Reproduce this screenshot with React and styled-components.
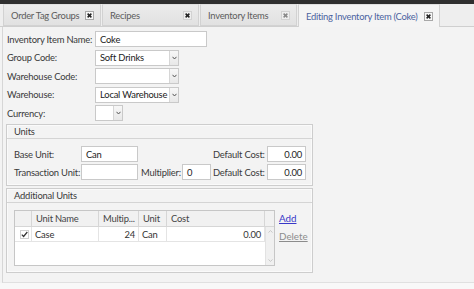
import React from "react";
import styled, { createGlobalStyle } from "styled-components";

const Global = createGlobalStyle`
  html, body { margin: 0; padding: 0; background: #f3f3f3; }
  body { font-family: Lato, "Segoe UI", sans-serif; font-size: 9.4px; letter-spacing: -0.2px; color: #333; }
  * { box-sizing: border-box; }
`;

const Window = styled.div`
  width: 474px;
  height: 289px;
  overflow: hidden;
  display: flex;
  flex-direction: column;
  background: #f3f3f3;
`;

const TopBar = styled.div`
  height: 4px;
  flex: none;
  background: #2f2f2f;
`;

const TabStrip = styled.div`
  height: 23px;
  flex: none;
  display: flex;
  gap: 1px;
  padding-left: 3px;
  background: #eeeeee;
  border-bottom: 1px solid #cfcfcf;
`;

const Tab = styled.div`
  width: ${(p) => p.$w}px;
  height: ${(p) => (p.$active ? "23px" : "22px")};
  display: flex;
  align-items: center;
  justify-content: space-between;
  padding: 0 6px 0 7px;
  border: 1px solid #d2d2d2;
  border-top-color: #e0e0e0;
  border-bottom: ${(p) => (p.$active ? "none" : "1px solid #d2d2d2")};
  background: ${(p) => (p.$active ? "#f4f4f4" : "linear-gradient(#ebebeb, #e1e1e1)")};
  color: ${(p) => (p.$active ? "#4b63a0" : "#5c5c5c")};
  font-size: 9.4px;
  letter-spacing: -0.25px;
  white-space: nowrap;
  position: relative;
  z-index: ${(p) => (p.$active ? 1 : 0)};
`;

const Close = styled.span`
  width: 9px;
  height: 9px;
  flex: none;
  display: flex;
  align-items: center;
  justify-content: center;
  border: 1px solid ${(p) => (p.$strong ? "#a8a8a8" : "#d2d2d2")};
  background: ${(p) => (p.$strong ? "#f7f7f7" : "#eeeeee")};
`;

const Content = styled.div`
  flex: 1;
  margin-left: 2px;
  border-left: 1px solid #d6d6d6;
  border-bottom: 1px solid #e0e0e0;
  display: flex;
  flex-direction: column;
`;

const Footer = styled.div`
  height: 6px;
  flex: none;
  background: #f8f8f8;
`;

const Form = styled.div`
  display: flex;
  flex-direction: column;
  gap: 2.5px;
  padding: 4px 0 0 4px;
`;

const Row = styled.div`
  display: grid;
  grid-template-columns: 88px auto;
  align-items: center;
  height: 16px;
`;

const Label = styled.span`
  color: #3a3a3a;
  white-space: nowrap;
`;

const TextBox = styled.div`
  width: ${(p) => p.$w}px;
  height: ${(p) => p.$h || 16}px;
  background: #fff;
  border: 1px solid #c9c9c9;
  padding: 0 ${(p) => (p.$right ? "3px" : "4px")};
  display: flex;
  align-items: center;
  justify-content: ${(p) => (p.$right ? "flex-end" : "flex-start")};
  color: #222;
  white-space: nowrap;
`;

const Combo = styled.div`
  width: ${(p) => p.$w}px;
  height: 16px;
  background: #fff;
  border: 1px solid #c9c9c9;
  display: flex;
  align-items: stretch;
`;

const ComboValue = styled.span`
  flex: 1;
  padding-left: 4px;
  display: flex;
  align-items: center;
  color: #222;
  white-space: nowrap;
  overflow: hidden;
`;

const DropBtn = styled.span`
  width: 9px;
  flex: none;
  border-left: 1px solid #d6d6d6;
  background: linear-gradient(#f7f7f7, #e8e8e8);
  display: flex;
  align-items: center;
  justify-content: center;
`;

const Group = styled.div`
  width: 307px;
  margin: ${(p) => p.$mt}px 0 0 3px;
  border: 1px solid #cdcdcd;
  box-shadow: inset 0 0 0 1px #fafafa;
  background: #f3f3f3;
`;

const GroupHeader = styled.div`
  height: 14px;
  border-bottom: 1px solid #d4d4d4;
  padding-left: 7px;
  display: flex;
  align-items: center;
  color: #3a3a3a;
`;

const UnitsBody = styled.div`
  display: grid;
  grid-template-columns: 67px 57px 44px 29px 56px 39px;
  grid-auto-rows: 16px;
  row-gap: 2px;
  align-items: center;
  padding: 7px 0 5px 7px;
`;

const CellLabel = styled.span`
  padding-left: ${(p) => p.$pl || 0}px;
  white-space: nowrap;
  color: #3a3a3a;
`;

const AddBody = styled.div`
  display: flex;
  padding: 7px 0 6px 7px;
`;

const Table = styled.div`
  width: 261px;
  height: 56px;
  border: 1px solid #c6c6c6;
  display: flex;
  flex-direction: column;
  background: #fff;
`;

const cols = "17px 67px 40px 28px 98px";

const HeadRow = styled.div`
  display: grid;
  grid-template-columns: ${cols} 9px;
  height: 16px;
  flex: none;
  background: #f1f1f1;
  border-bottom: 1px solid #d6d6d6;
`;

const HeadCell = styled.div`
  border-right: ${(p) => (p.$last ? "none" : "1px solid #d6d6d6")};
  padding-left: 4px;
  display: flex;
  align-items: center;
  color: #444;
  white-space: nowrap;
  overflow: hidden;
`;

const TableBody = styled.div`
  flex: 1;
  display: flex;
`;

const Rows = styled.div`
  flex: 1;
`;

const DataRow = styled.div`
  display: grid;
  grid-template-columns: ${cols};
  height: 15px;
  border-bottom: 1px solid #e4e4e4;
`;

const DataCell = styled.div`
  border-right: 1px solid #e4e4e4;
  padding: 0 ${(p) => (p.$right ? "3px" : "0")} 0 ${(p) => (p.$right ? "0" : "3px")};
  display: flex;
  align-items: center;
  justify-content: ${(p) => (p.$right ? "flex-end" : p.$center ? "center" : "flex-start")};
  color: #333;
  white-space: nowrap;
`;

const ScrollBar = styled.div`
  width: 9px;
  flex: none;
  background: #f0f0f0;
  border-left: 1px solid #e2e2e2;
  display: flex;
  flex-direction: column;
  justify-content: space-between;
  align-items: center;
  padding: 3px 0;
`;

const Links = styled.div`
  display: flex;
  flex-direction: column;
  gap: 5px;
  padding: 2px 0 0 4px;
  font-size: 9.8px;
  letter-spacing: 0;
`;

const Link = styled.span`
  text-decoration: underline;
  color: ${(p) => (p.$disabled ? "#8c8c8c" : "#3838c8")};
  line-height: 13px;
`;

const Chevron = () => (
  <svg width="5" height="4" viewBox="0 0 5 4">
    <path d="M0.5 0.8 L2.5 3 L4.5 0.8" fill="none" stroke="#555" strokeWidth="1" />
  </svg>
);

const XMark = ({ color = "#222" }) => (
  <svg width="5" height="5" viewBox="0 0 5 5">
    <path d="M0.6 0.6 L4.4 4.4 M4.4 0.6 L0.6 4.4" stroke={color} strokeWidth="1.5" />
  </svg>
);

const Check = () => (
  <svg width="9" height="9" viewBox="0 0 9 9">
    <rect x="0.5" y="0.5" width="8" height="8" fill="#fff" stroke="#d0d0d0" />
    <path d="M1.8 4.6 L3.6 6.5 L7.3 2" fill="none" stroke="#333" strokeWidth="1.2" />
  </svg>
);

const Arrow = ({ up }) => (
  <svg width="5" height="3" viewBox="0 0 5 3">
    <path d={up ? "M0.5 2.6 L2.5 0.5 L4.5 2.6" : "M0.5 0.4 L2.5 2.5 L4.5 0.4"} fill="none" stroke="#c8c8c8" strokeWidth="1" />
  </svg>
);

const ComboBox = ({ w, value }) => (
  <Combo $w={w}>
    <ComboValue>{value}</ComboValue>
    <DropBtn>
      <Chevron />
    </DropBtn>
  </Combo>
);

export default function App() {
  return (
    <>
      <Global />
      <Window>
        <TopBar />
        <TabStrip>
          <Tab $w={98}>
            Order Tag Groups
            <Close $strong>
              <XMark />
            </Close>
          </Tab>
          <Tab $w={97}>
            Recipes
            <Close>
              <XMark />
            </Close>
          </Tab>
          <Tab $w={97}>
            Inventory Items
            <Close>
              <XMark color="#888" />
            </Close>
          </Tab>
          <Tab $w={142} $active>
            Editing Inventory Item (Coke)
            <Close $strong>
              <XMark />
            </Close>
          </Tab>
        </TabStrip>
        <Content>
          <Form>
            <Row>
              <Label>Inventory Item Name:</Label>
              <TextBox $w={112}>Coke</TextBox>
            </Row>
            <Row>
              <Label>Group Code:</Label>
              <ComboBox w={84} value="Soft Drinks" />
            </Row>
            <Row>
              <Label>Warehouse Code:</Label>
              <ComboBox w={84} value="" />
            </Row>
            <Row>
              <Label>Warehouse:</Label>
              <ComboBox w={84} value="Local Warehouse" />
            </Row>
            <Row>
              <Label>Currency:</Label>
              <ComboBox w={28} value="" />
            </Row>
          </Form>

          <Group $mt={3}>
            <GroupHeader>Units</GroupHeader>
            <UnitsBody>
              <CellLabel>Base Unit:</CellLabel>
              <TextBox $w={57}>Can</TextBox>
              <span />
              <span />
              <CellLabel $pl={2}>Default Cost:</CellLabel>
              <TextBox $w={39} $right>0.00</TextBox>

              <CellLabel>Transaction Unit:</CellLabel>
              <TextBox $w={57} />
              <CellLabel $pl={3}>Multiplier:</CellLabel>
              <TextBox $w={29}>0</TextBox>
              <CellLabel $pl={2}>Default Cost:</CellLabel>
              <TextBox $w={39} $right>0.00</TextBox>
            </UnitsBody>
          </Group>

          <Group $mt={2}>
            <GroupHeader>Additional Units</GroupHeader>
            <AddBody>
              <Table>
                <HeadRow>
                  <HeadCell />
                  <HeadCell>Unit Name</HeadCell>
                  <HeadCell>Multip...</HeadCell>
                  <HeadCell>Unit</HeadCell>
                  <HeadCell>Cost</HeadCell>
                  <HeadCell $last />
                </HeadRow>
                <TableBody>
                  <Rows>
                    <DataRow>
                      <DataCell $center>
                        <Check />
                      </DataCell>
                      <DataCell>Case</DataCell>
                      <DataCell $right>24</DataCell>
                      <DataCell>Can</DataCell>
                      <DataCell $right>0.00</DataCell>
                    </DataRow>
                  </Rows>
                  <ScrollBar>
                    <Arrow up />
                    <Arrow />
                  </ScrollBar>
                </TableBody>
              </Table>
              <Links>
                <Link>Add</Link>
                <Link $disabled>Delete</Link>
              </Links>
            </AddBody>
          </Group>
        </Content>
        <Footer />
      </Window>
    </>
  );
}
